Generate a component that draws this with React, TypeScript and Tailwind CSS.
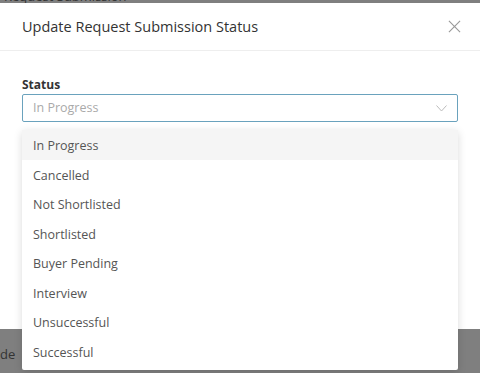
import { useState } from 'react';

const statuses = [
  'In Progress',
  'Cancelled',
  'Not Shortlisted',
  'Shortlisted',
  'Buyer Pending',
  'Interview',
  'Unsuccessful',
  'Successful',
];

function CloseIcon() {
  return (
    <svg className="w-[13px] h-[13px] text-[#999]" viewBox="0 0 14 14" fill="none" stroke="currentColor" strokeWidth={1.2}>
      <path d="M1 1l12 12M13 1L1 13" />
    </svg>
  );
}

function Chevron() {
  return (
    <svg className="w-[11px] h-[7px] text-[#bbb]" viewBox="0 0 11 7" fill="none" stroke="currentColor" strokeWidth={1}>
      <path d="M0.5 0.5l5 5.5 5-5.5" />
    </svg>
  );
}

export default function App() {
  const [selected] = useState('In Progress');

  return (
    <div className="flex flex-col w-[480px] h-[373px] overflow-hidden bg-[#7f7f7f] font-['Open_Sans',sans-serif]">
      {/* page behind the overlay, top edge */}
      <div className="h-[3px] shrink-0 overflow-hidden pl-[4px]">
        <div className="-mt-[12px] text-[13px] leading-[17px] text-[#333]">Request Submission</div>
      </div>

      {/* modal */}
      <div className="-mx-[10px] h-[326px] shrink-0 bg-white">
        <div className="flex items-center justify-between h-[48px] border-b border-[#eee] px-[32px]">
          <h3 className="text-[14.5px] text-[#333] pt-[1px]">Update Request Submission Status</h3>
          <button className="mr-[-3px]">
            <CloseIcon />
          </button>
        </div>

        <div className="px-[32px] pt-[26px] flex flex-col">
          <label className="text-[12px] font-bold text-[#333] leading-[16px] mb-[1px]">Status</label>
          <div className="relative">
            <div className="flex items-center justify-between h-[28px] border border-[#6aa2bd] rounded-[2px] px-[10px]">
              <span className="text-[12.5px] text-[#aaa] pt-[1px]">{selected}</span>
              <Chevron />
            </div>

            {/* open select menu */}
            <ul className="absolute z-10 top-full left-0 right-0 mt-[8px] bg-white pb-[4px] shadow-[0_2px_8px_rgba(0,0,0,0.15)] rounded-[2px]">
              {statuses.map((s) => (
                <li
                  key={s}
                  className={`h-[29.5px] flex items-center pl-[11px] pt-[4px] text-[12.5px] text-[#555] ${s === selected ? 'bg-[#f5f5f5]' : ''}`}
                >
                  {s}
                </li>
              ))}
            </ul>
          </div>

          <div className="mt-[40px] h-[28px] border border-[#ccc] rounded-[2px]" />
          <div className="mt-[41px] h-[28px] border border-[#ccc] rounded-[2px]" />
          <div className="mt-[19px] h-[28px] border border-[#6aa2bd] rounded-[2px]" />
        </div>
      </div>

      {/* page behind the overlay, bottom */}
      <div className="flex-1 pt-[16px] text-[13px] text-[#333]">de</div>
    </div>
  );
}
